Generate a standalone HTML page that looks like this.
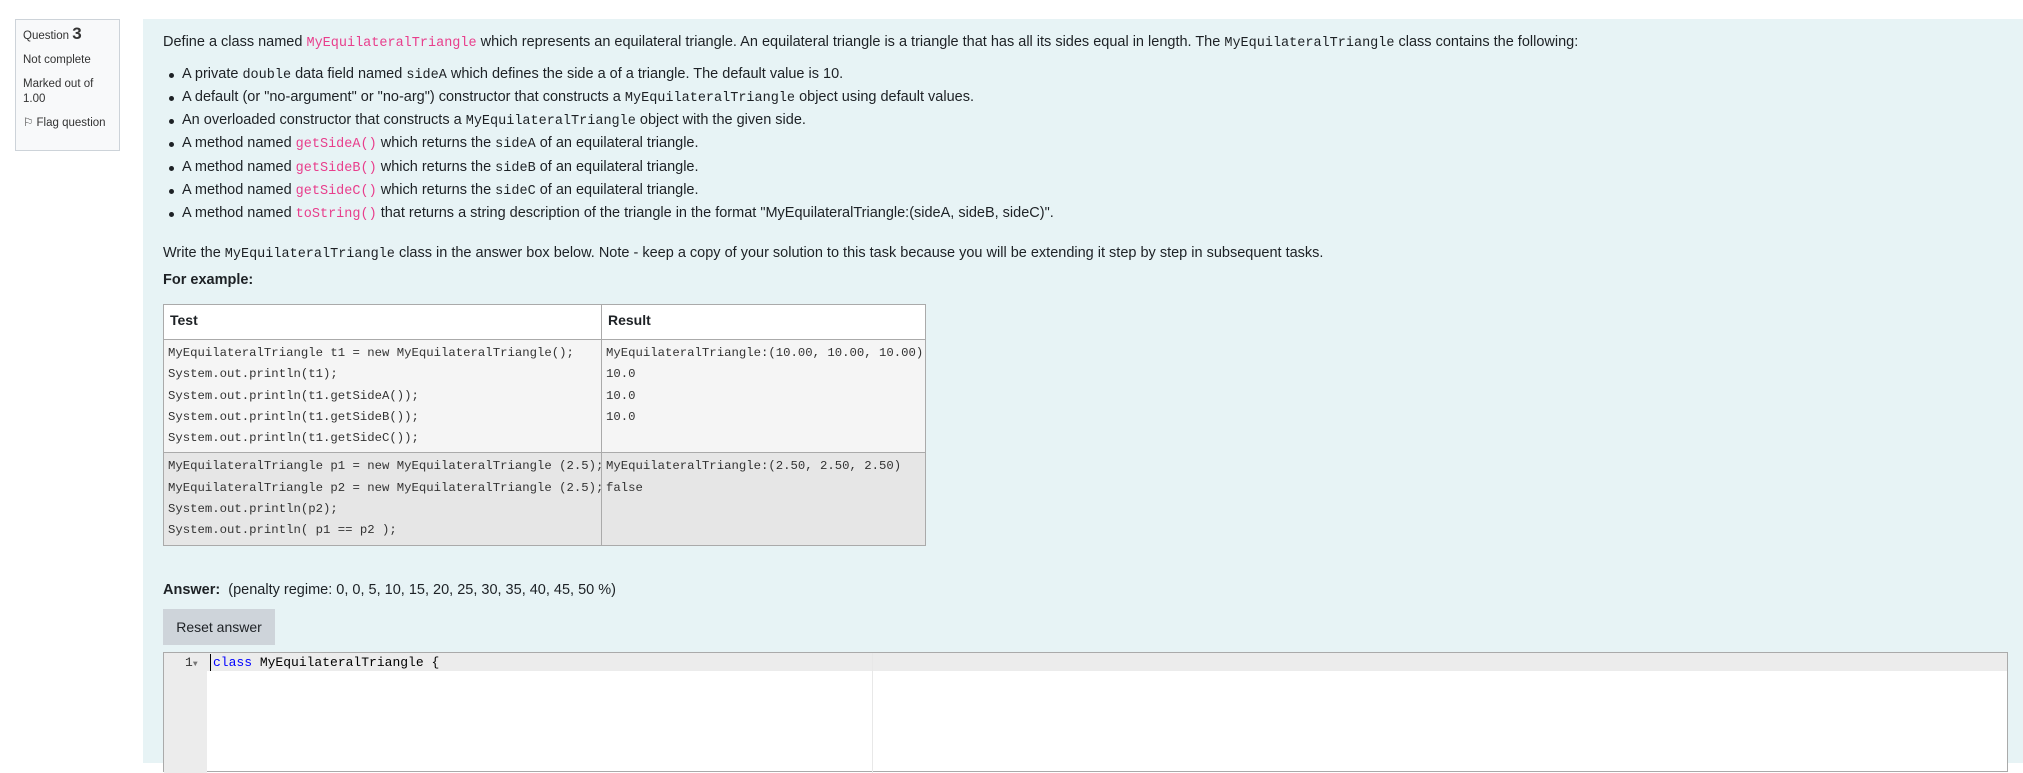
<!DOCTYPE html>
<html><head><meta charset="utf-8"><style>
*{box-sizing:border-box;margin:0;padding:0}
body{width:2023px;height:763px;overflow:hidden;background:#fff;font-family:"Liberation Sans",sans-serif;color:#1d2125;font-size:14.5px;position:relative}
.qb{position:absolute;left:15px;top:19px;width:105px;height:132px;background:#f8f9fa;border:1px solid #cdd3d9;padding:6px 7px;font-size:11.5px;color:#333}
.qb div{margin-bottom:9px;line-height:15px}
.qb b{font-size:17px}
.content{position:absolute;left:143px;top:19px;width:1880px;height:744px;background:#e7f3f5}
.abs{position:absolute;white-space:nowrap}
code{font-family:"Liberation Mono",monospace;color:#e83e8c;font-size:13.5px}
tt{font-family:"Liberation Mono",monospace;font-size:13.5px;color:#1d2125}
.li{position:absolute;left:182px;white-space:nowrap}
.li::before{content:"";position:absolute;left:-13px;top:7px;width:5px;height:5px;border-radius:50%;background:#1d2125}
table{position:absolute;left:163px;top:304px;width:762px;border-collapse:collapse;table-layout:fixed}
td,th{border:1px solid #aaa;vertical-align:top;text-align:left;overflow:hidden}
th{background:#fff;height:35px;padding:7px 6px;font-size:14px}
td{font-family:"Liberation Mono",monospace;font-size:12.3px;line-height:21.3px;padding:3px 4px;white-space:pre;color:#333}
.r1 td{background:#f5f5f5;height:112px}
.r2 td{background:#e6e6e6;height:91px}
.btn{position:absolute;left:163px;top:609px;width:112px;height:36px;background:#ced4da;font-size:14px;line-height:36px;text-align:center;color:#1d2125}
.ed{position:absolute;left:163px;top:652px;width:1845px;height:120px;background:#fff;border:1px solid #aaa}
.gut{position:absolute;left:0;top:0;width:43px;height:120px;background:#ececec}
.l1{position:absolute;left:0;top:0;width:100%;height:18px;background:#ececec}
.pm{position:absolute;left:708px;top:0;width:1px;height:120px;background:#e8e8e8}
.code{position:absolute;left:46px;top:1px;font-family:"Liberation Mono",monospace;font-size:13px;line-height:17px;color:#000;border-left:1px solid #000;padding-left:2px}
</style></head><body>
<div class="qb"><div>Question <b>3</b></div><div>Not complete</div><div>Marked out of<br>1.00</div><div>⚐ Flag question</div></div>
<div class="content"></div>
<div class="abs" style="left:163px;top:34px">Define a class named <code>MyEquilateralTriangle</code> which represents an equilateral triangle. An equilateral triangle is a triangle that has all its sides equal in length. The <tt>MyEquilateralTriangle</tt> class contains the following:</div>
<div class="li" style="top:66px">A private <tt>double</tt> data field named <tt>sideA</tt> which defines the side a of a triangle. The default value is 10.</div>
<div class="li" style="top:89px">A default (or "no-argument" or "no-arg") constructor that constructs a <tt>MyEquilateralTriangle</tt> object using default values.</div>
<div class="li" style="top:112px">An overloaded constructor that constructs a <tt>MyEquilateralTriangle</tt> object with the given side.</div>
<div class="li" style="top:135px">A method named <code>getSideA()</code> which returns the <tt>sideA</tt> of an equilateral triangle.</div>
<div class="li" style="top:159px">A method named <code>getSideB()</code> which returns the <tt>sideB</tt> of an equilateral triangle.</div>
<div class="li" style="top:182px">A method named <code>getSideC()</code> which returns the <tt>sideC</tt> of an equilateral triangle.</div>
<div class="li" style="top:205px">A method named <code>toString()</code> that returns a string description of the triangle in the format "MyEquilateralTriangle:(sideA, sideB, sideC)".</div>
<div class="abs" style="left:163px;top:245px">Write the <tt>MyEquilateralTriangle</tt> class in the answer box below. Note - keep a copy of your solution to this task because you will be extending it step by step in subsequent tasks.</div>
<div class="abs" style="left:163px;top:272px;font-weight:bold">For example:</div>
<table>
<colgroup><col style="width:438px"><col style="width:324px"></colgroup>
<tr><th>Test</th><th>Result</th></tr>
<tr class="r1"><td>MyEquilateralTriangle t1 = new MyEquilateralTriangle();
System.out.println(t1);
System.out.println(t1.getSideA());
System.out.println(t1.getSideB());
System.out.println(t1.getSideC());</td><td>MyEquilateralTriangle:(10.00, 10.00, 10.00)
10.0
10.0
10.0</td></tr>
<tr class="r2"><td>MyEquilateralTriangle p1 = new MyEquilateralTriangle (2.5);
MyEquilateralTriangle p2 = new MyEquilateralTriangle (2.5);
System.out.println(p2);
System.out.println( p1 == p2 );</td><td>MyEquilateralTriangle:(2.50, 2.50, 2.50)
false</td></tr>
</table>
<div class="abs" style="left:163px;top:582px"><b>Answer:</b>&nbsp; (penalty regime: 0, 0, 5, 10, 15, 20, 25, 30, 35, 40, 45, 50 %)</div>
<div class="btn">Reset answer</div>
<div class="ed"><div class="l1"></div><div class="gut"></div><div class="pm"></div>
<div class="abs" style="left:21px;top:1px;font-family:'Liberation Mono',monospace;font-size:13px;line-height:17px;color:#333">1<span style="font-size:8px;color:#777">▼</span></div>
<div class="code"><span style="color:#00f">class</span> MyEquilateralTriangle {</div></div>
</body></html>
